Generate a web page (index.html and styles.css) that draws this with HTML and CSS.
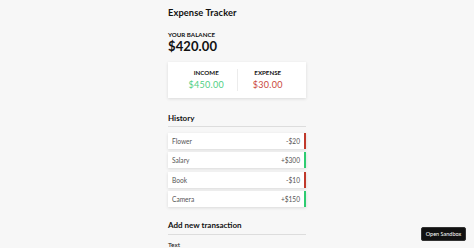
FILE: index.html
```html
<!DOCTYPE html>
<html>
<head>
<meta charset="utf-8">
<link rel="stylesheet" href="styles.css">
</head>
<body>
<div class="container">
  <h2 class="title">Expense Tracker</h2>
  <h4 class="label">Your Balance</h4>
  <h1 class="balance">$420.00</h1>
  <div class="inc-exp">
    <div class="col">
      <h4 class="label">Income</h4>
      <p class="money plus">$450.00</p>
    </div>
    <div class="col">
      <h4 class="label">Expense</h4>
      <p class="money minus">$30.00</p>
    </div>
  </div>
  <h3 class="section">History</h3>
  <ul class="list">
    <li class="item minus-item"><span>Flower</span><span>-$20</span></li>
    <li class="item plus-item"><span>Salary</span><span>+$300</span></li>
    <li class="item minus-item"><span>Book</span><span>-$10</span></li>
    <li class="item plus-item"><span>Camera</span><span>+$150</span></li>
  </ul>
  <h3 class="section section-add">Add new transaction</h3>
  <div class="form-label">Text</div>
</div>
<button class="sandbox">Open Sandbox</button>
</body>
</html>
```
FILE: styles.css
```css
* { box-sizing: border-box; }
html, body { margin: 0; padding: 0; }
body {
  background: #f7f7f7;
  font-family: Lato, "Liberation Sans", sans-serif;
  color: #111;
  width: 474px;
  height: 248px;
  overflow: hidden;
  position: relative;
}
.container {
  width: 138px;
  margin: 0 auto;
  padding-top: 7px;
}
.title {
  margin: 0;
  font-size: 9.3px;
  font-weight: 700;
  letter-spacing: 0.1px;
  line-height: 12px;
}
.label {
  margin: 0;
  font-size: 6.2px;
  font-weight: 700;
  text-transform: uppercase;
  line-height: 8px;
}
.container > .label { margin-top: 12px; }
.balance {
  margin: 0;
  font-size: 13px;
  font-weight: 700;
  line-height: 14px;
  letter-spacing: 0.1px;
}
.inc-exp {
  margin-top: 9px;
  background: #fff;
  box-shadow: 0 1px 3px rgba(0,0,0,0.12);
  display: flex;
  justify-content: space-between;
  padding: 7px 8px;
  height: 36px;
}
.col {
  flex: 1;
  text-align: center;
}
.col:first-child { border-right: 1px solid #ececec; }
.money {
  margin: 3px 0 0;
  font-size: 9px;
  line-height: 10px;
  letter-spacing: 0.3px;
}
.money.plus { color: #4fcf84; }
.money.minus { color: #c9473b; }
.section {
  margin: 15px 0 0;
  font-size: 8px;
  font-weight: 700;
  line-height: 10px;
  padding-bottom: 3px;
  border-bottom: 1px solid #ddd;
}
.list {
  list-style: none;
  margin: 6px 0 0;
  padding: 0;
}
.item {
  background: #fff;
  box-shadow: 0 1px 3px rgba(0,0,0,0.12);
  color: #555;
  display: flex;
  justify-content: space-between;
  align-items: center;
  padding: 0 4px;
  height: 16px;
  font-size: 6.6px;
  margin-bottom: 3.4px;
}
.plus-item { border-right: 2px solid #2ecc71; }
.minus-item { border-right: 2px solid #c0392b; }
.section-add { margin-top: 13px; padding-bottom: 4px; }
.form-label {
  margin-top: 6px;
  font-size: 6.5px;
}
.sandbox {
  position: absolute;
  left: 421px;
  top: 227px;
  width: 45px;
  height: 14px;
  background: #111;
  color: #fff;
  border: 1px solid #333;
  border-radius: 2px;
  font-family: Lato, "Liberation Sans", sans-serif;
  font-size: 5.5px;
  padding: 0;
}
```
